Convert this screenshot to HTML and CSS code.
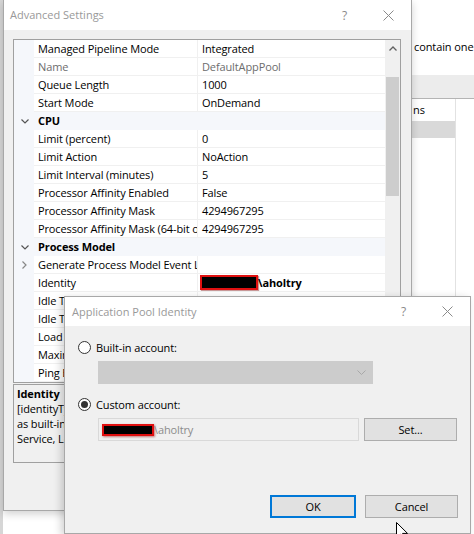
FILE: index.html
```html
<!DOCTYPE html>
<html>
<head>
<meta charset="utf-8">
<link rel="stylesheet" href="styles.css">
</head>
<body>
<div class="desk">
  <div class="bgwin">
    <div class="bg-edge"></div>
    <div class="bg-main">
      <p class="bg-text">contain one</p>
      <div class="bg-header"></div>
      <div class="bg-list">
        <div class="bg-col">
          <div class="bg-colhead">ns</div>
          <div class="bg-row sel"></div>
        </div>
      </div>
    </div>
  </div>

  <div class="win adv">
    <div class="titlebar">
      <span class="title">Advanced Settings</span>
      <span class="tb-btn help">?</span>
      <span class="tb-btn close"><svg width="11" height="11" viewBox="0 0 11 11"><path d="M0.5 0.5L10.5 10.5M10.5 0.5L0.5 10.5" stroke="#8a8a8a" stroke-width="1"/></svg></span>
    </div>
    <div class="adv-body">
      <div class="grid">
        <div class="rows">
          <div class="row"><span class="gut"></span><span class="name">Managed Pipeline Mode</span><span class="val">Integrated</span></div>
          <div class="row ro"><span class="gut"></span><span class="name">Name</span><span class="val">DefaultAppPool</span></div>
          <div class="row"><span class="gut"></span><span class="name">Queue Length</span><span class="val">1000</span></div>
          <div class="row"><span class="gut"></span><span class="name">Start Mode</span><span class="val">OnDemand</span></div>
          <div class="row cat"><span class="gut"><svg width="8" height="5" viewBox="0 0 8 5"><path d="M0.5 0.5L4 4L7.5 0.5" fill="none" stroke="#555" stroke-width="1.2"/></svg></span><span class="name">CPU</span></div>
          <div class="row"><span class="gut"></span><span class="name">Limit (percent)</span><span class="val">0</span></div>
          <div class="row"><span class="gut"></span><span class="name">Limit Action</span><span class="val">NoAction</span></div>
          <div class="row"><span class="gut"></span><span class="name">Limit Interval (minutes)</span><span class="val">5</span></div>
          <div class="row"><span class="gut"></span><span class="name">Processor Affinity Enabled</span><span class="val">False</span></div>
          <div class="row"><span class="gut"></span><span class="name">Processor Affinity Mask</span><span class="val">4294967295</span></div>
          <div class="row"><span class="gut"></span><span class="name">Processor Affinity Mask (64-bit option)</span><span class="val">4294967295</span></div>
          <div class="row cat"><span class="gut"><svg width="8" height="5" viewBox="0 0 8 5"><path d="M0.5 0.5L4 4L7.5 0.5" fill="none" stroke="#555" stroke-width="1.2"/></svg></span><span class="name">Process Model</span></div>
          <div class="row"><span class="gut"><svg width="5" height="8" viewBox="0 0 5 8"><path d="M0.5 0.5L4 4L0.5 7.5" fill="none" stroke="#888" stroke-width="1.2"/></svg></span><span class="name">Generate Process Model Event Log Entry</span><span class="val"></span></div>
          <div class="row"><span class="gut"></span><span class="name">Identity</span><span class="val strong"><span class="redact r1"></span>\aholtry</span></div>
          <div class="row"><span class="gut"></span><span class="name">Idle Time-out (minutes)</span><span class="val">20</span></div>
          <div class="row"><span class="gut"></span><span class="name">Idle Time-out Action</span><span class="val">Terminate</span></div>
          <div class="row"><span class="gut"></span><span class="name">Load User Profile</span><span class="val">True</span></div>
          <div class="row"><span class="gut"></span><span class="name">Maximum Worker Processes</span><span class="val">1</span></div>
          <div class="row"><span class="gut"></span><span class="name">Ping Enabled</span><span class="val">True</span></div>
        </div>
        <div class="scrollbar">
          <div class="sb-arrow"><svg width="8" height="5" viewBox="0 0 8 5"><path d="M0.5 4.5L4 1L7.5 4.5" fill="none" stroke="#606060" stroke-width="1.3"/></svg></div>
          <div class="sb-track-top"></div>
          <div class="sb-thumb"></div>
        </div>
      </div>
      <div class="desc">
        <div class="desc-title">Identity</div>
        <div class="desc-text">[identityType, username, password] Configures the application pool to run<br>as built-in account, i.e. Application Pool Identity (recommended), Network<br>Service, Local System, Local Service, or as a specific user identity.</div>
      </div>
    </div>
  </div>

  <div class="win dlg">
    <div class="titlebar">
      <span class="title">Application Pool Identity</span>
      <span class="tb-btn help">?</span>
      <span class="tb-btn close"><svg width="11" height="11" viewBox="0 0 11 11"><path d="M0.5 0.5L10.5 10.5M10.5 0.5L0.5 10.5" stroke="#8a8a8a" stroke-width="1"/></svg></span>
    </div>
    <div class="dlg-body">
      <div class="radio-row"><span class="radio"></span><span class="radio-label">Built-in account:</span></div>
      <div class="combo"><svg width="9" height="5" viewBox="0 0 9 5"><path d="M0.5 0.5L4.5 4.5L8.5 0.5" fill="none" stroke="#a8a8a8" stroke-width="1"/></svg></div>
      <div class="radio-row second"><span class="radio checked"></span><span class="radio-label">Custom account:</span></div>
      <div class="acct-row">
        <div class="textbox"><span class="redact r2"></span>\aholtry</div>
        <div class="btn set">Set...</div>
      </div>
      <div class="btn-row">
        <div class="btn ok">OK</div>
        <div class="btn cancel">Cancel</div>
      </div>
    </div>
  </div>

  <svg class="cursor" width="12" height="19" viewBox="0 0 12 19"><path d="M0.5 0.5L0.5 16L4.3 12.3L7 18.3L9.2 17.3L6.6 11.4L11.5 11.4Z" fill="#fff" stroke="#000" stroke-width="1"/></svg>
</div>
</body>
</html>
```

FILE: styles.css
```css
* { box-sizing: border-box; }
html, body { margin: 0; padding: 0; }
body {
  width: 474px;
  height: 534px;
  overflow: hidden;
  background: #fff;
  font-family: "Open Sans", "Noto Sans", sans-serif;
  font-size: 11px;
  letter-spacing: -0.12px;
  color: #000;
}
.desk { position: relative; width: 474px; height: 534px; overflow: hidden; }

/* background window */
.bgwin { position: absolute; left: 0; top: 0; width: 474px; height: 534px; display: flex; }
.bg-edge { width: 3px; background: #d6d6d6; }
.bg-main { flex: 1; display: flex; flex-direction: column; overflow: hidden; }
.bg-text { margin: 39px 0 0 411px; white-space: nowrap; font-size: 11px; line-height: 16px; letter-spacing: -0.1px; }
.bg-header { margin: 20px 0 0 409px; height: 24px; background: #ececec; border-bottom: 1px solid #b4b4b4; }
.bg-list { flex: 1; display: flex; margin-left: 408px; }
.bg-col { width: 45px; border-right: 1px solid #e2e2e2; display: flex; flex-direction: column; }
.bg-colhead { height: 22px; line-height: 22px; font-size: 11px; white-space: nowrap; padding-left: 2px; letter-spacing: 0; }
.bg-row.sel { height: 17px; background: #d9d9d9; }

/* windows */
.win { position: absolute; display: flex; flex-direction: column; background: #f0f0f0; }
.titlebar { display: flex; align-items: center; background: #fff; flex: none; }
.title { flex: 1; color: #999; font-size: 11px; white-space: nowrap; letter-spacing: 0; }
.tb-btn { display: flex; justify-content: center; align-items: center; color: #8a8a8a; font-size: 12px; }
.tb-btn.help { width: 43px; }
.tb-btn.close { width: 45px; }

.adv {
  left: 3px; top: 0; width: 409px; height: 511px;
  border: 1px solid #a8a8a8; border-top: none;
  box-shadow: 0 3px 8px rgba(0,0,0,0.18);
}
.adv .titlebar { height: 30px; padding-left: 6px; }
.adv .title { line-height: 30px; }
.adv-body { flex: 1; padding: 9px 10px 0 9px; display: flex; flex-direction: column; }

.grid { display: flex; height: 344px; border: 1px solid #a0a0a0; background: #fff; }
.rows { flex: 1; display: flex; flex-direction: column; overflow: hidden; }
.row { display: flex; height: 18px; line-height: 17px; flex: none; }
.gut { width: 20px; background: #f5f7fb; display: flex; align-items: center; justify-content: center; flex: none; }
.name { width: 164px; padding-left: 4px; white-space: nowrap; overflow: hidden; border-bottom: 1px solid #f0f0f0; border-right: 1px solid #f0f0f0; flex: none; }
.val { flex: 1; padding-left: 4px; white-space: nowrap; overflow: hidden; border-bottom: 1px solid #f0f0f0; display: flex; align-items: center; }
.row.ro .name, .row.ro .val { color: #6d6d6d; }
.row.cat .name { flex: 1; width: auto; font-weight: 700; background: #f5f7fb; border: none; }
.row.cat .gut { padding-left: 2px; }
.val.strong { font-weight: 700; padding-left: 2px; }
.redact { display: inline-block; background: #000; border: 2px solid #e01010; flex: none; }
.redact.r1 { width: 58px; height: 15px; box-shadow: 1px 1px 1px rgba(120,0,0,0.4); }

.scrollbar { width: 15px; background: #f0f0f0; display: flex; flex-direction: column; flex: none; }
.sb-arrow { height: 17px; display: flex; align-items: center; justify-content: center; }
.sb-track-top { height: 20px; }
.sb-thumb { height: 119px; margin: 0 1px; background: #cdcdcd; }

.desc { margin-top: 1px; height: 79px; border: 1px solid #a0a0a0; padding: 1px 3px; line-height: 15px; white-space: nowrap; overflow: hidden; }
.desc-title { font-weight: 700; }

/* dialog */
.dlg {
  left: 64px; top: 296px; width: 407px; height: 238px;
  border: 1px solid #a8a8a8;
  box-shadow: -3px 2px 8px rgba(0,0,0,0.18);
}
.dlg .titlebar { height: 29px; padding-left: 7px; }
.dlg .title { line-height: 29px; }
.dlg-body { flex: 1; padding: 13px 12px 0 13px; display: flex; flex-direction: column; }
.radio-row { display: flex; align-items: center; height: 16px; }
.radio-row.second { margin-top: 12px; }
.radio { width: 13px; height: 13px; border: 1px solid #333; border-radius: 50%; background: #fff; display: flex; align-items: center; justify-content: center; flex: none; }
.radio.checked::after { content: ""; width: 7px; height: 7px; border-radius: 50%; background: #333; }
.radio-label { margin-left: 5px; }
.combo { margin: 6px 0 0 20px; width: 275px; height: 23px; background: #cccccc; border: 1px solid #cccccc; display: flex; align-items: center; justify-content: flex-end; padding-right: 6px; }
.acct-row { display: flex; margin: 6px 0 0 20px; gap: 5px; }
.textbox { width: 261px; height: 23px; border: 1px solid #d9d9d9; background: #f0f0f0; color: #8c8c8c; display: flex; align-items: center; padding-left: 3px; }
.redact.r2 { width: 52px; height: 12px; box-shadow: 1px 1px 2px rgba(150,0,0,0.5); }
.btn { height: 23px; background: #e1e1e1; border: 1px solid #adadad; display: flex; align-items: center; justify-content: center; }
.btn.set { width: 93px; }
.btn-row { display: flex; justify-content: flex-end; gap: 9px; margin-top: 54px; }
.btn.ok { width: 86px; border: 2px solid #0078d7; }
.btn.cancel { width: 93px; }

.cursor { position: absolute; left: 396px; top: 522px; }
```
